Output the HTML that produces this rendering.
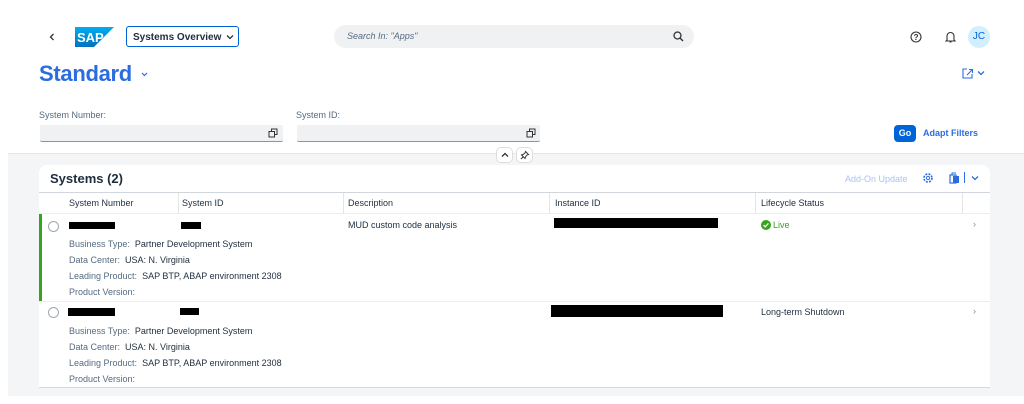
<!DOCTYPE html>
<html><head><meta charset="utf-8"><style>
*{box-sizing:border-box;margin:0;padding:0}
body{width:1024px;height:404px;background:#fff;font-family:"Liberation Sans",sans-serif;position:relative;overflow:hidden;color:#1d2d3e}
.a{position:absolute}
.lbl{font-size:9px;color:#556b82}
.inp{background:#eff1f2;border-bottom:1px solid #8396a8;height:17px;border-radius:2px}
.th{font-size:9px;color:#1d2d3e;top:198px}
.vl{position:absolute;top:193px;width:1px;height:20px;background:#e5e5e5}
.det{font-size:9px;color:#556b82;position:absolute;left:69px}
.det b{font-weight:normal;color:#1d2d3e}
.blk{position:absolute;background:#000}
.radio{position:absolute;width:11px;height:11px;border:1px solid #a0a8b0;border-radius:50%;left:48px}
</style></head><body>
<svg class="a" style="left:49px;top:33px" width="6" height="8" viewBox="0 0 6 8"><path d="M4.5 1L1.5 4l3 3" fill="none" stroke="#333" stroke-width="1.3"/></svg>
<svg class="a" style="left:75px;top:27px" width="39" height="20" viewBox="0 0 39 20"><defs><linearGradient id="g" x1="0" y1="0" x2="0" y2="1"><stop offset="0" stop-color="#00aeef"/><stop offset="1" stop-color="#0070c0"/></linearGradient></defs><polygon points="0,0 39,0 19,20 0,20" fill="url(#g)"/><text x="2" y="15" font-family="Liberation Sans" font-weight="bold" font-size="13" fill="#fff">SAP</text></svg>
<div class="a" style="left:126px;top:26px;width:113px;height:21px;border:1px solid #0064d9;border-radius:3px;font-size:10px;font-weight:bold;padding:5px 0 0 6px;color:#1d2d3e">Systems Overview</div>
<svg class="a" style="left:226px;top:34px" width="8" height="6" viewBox="0 0 8 6"><path d="M1 1.5l3 3 3-3" fill="none" stroke="#333" stroke-width="1.3"/></svg>
<div class="a" style="left:334px;top:25px;width:360px;height:23px;background:#eff1f2;border-radius:12px;font-size:9px;font-style:italic;color:#556b82;padding:6px 0 0 13px">Search In: "Apps"</div>
<svg class="a" style="left:673px;top:31px" width="11" height="11" viewBox="0 0 11 11"><circle cx="4.5" cy="4.5" r="3.5" fill="none" stroke="#333" stroke-width="1.3"/><line x1="7" y1="7" x2="10" y2="10" stroke="#333" stroke-width="1.4"/></svg>
<svg class="a" style="left:910px;top:31px" width="12" height="12" viewBox="0 0 12 12"><circle cx="6" cy="6" r="5" fill="none" stroke="#333" stroke-width="1.1"/><text x="3.6" y="9" font-size="8" font-family="Liberation Sans" font-weight="bold" fill="#333">?</text></svg>
<svg class="a" style="left:945px;top:31px" width="11" height="12" viewBox="0 0 11 12"><path d="M2 9V5a3.5 3.5 0 0 1 7 0v4l1 1H1z" fill="none" stroke="#333" stroke-width="1.1"/><path d="M4.5 11h2" stroke="#333"/></svg>
<div class="a" style="left:968px;top:26px;width:22px;height:22px;border-radius:50%;background:#d1efff;color:#0064d9;font-size:10px;text-align:center;line-height:22px">JC</div>
<div class="a" style="left:39px;top:61px;font-size:22px;font-weight:bold;color:#2b6de0;letter-spacing:-0.3px">Standard</div>
<svg class="a" style="left:141px;top:72px" width="7" height="5" viewBox="0 0 7 5"><path d="M1 1l2.5 2.5L6 1" fill="none" stroke="#2b6de0" stroke-width="1.2"/></svg>
<svg class="a" style="left:962px;top:68px" width="12" height="11" viewBox="0 0 12 11"><path d="M5 1H1v9h9V6" fill="none" stroke="#2b6de0" stroke-width="1.1"/><path d="M5 7L10 2M7 1.5h3.5V5" fill="none" stroke="#2b6de0" stroke-width="1.1"/></svg>
<svg class="a" style="left:977px;top:70px" width="8" height="6" viewBox="0 0 8 6"><path d="M1 1.5l3 3 3-3" fill="none" stroke="#2b6de0" stroke-width="1.3"/></svg>
<div class="a lbl" style="left:39px;top:110px">System Number:</div>
<div class="a lbl" style="left:296px;top:110px">System ID:</div>
<div class="a inp" style="left:40px;top:125px;width:243px"></div>
<div class="a inp" style="left:297px;top:125px;width:243px"></div>
<svg class="a" style="left:268px;top:128px" width="10" height="10" viewBox="0 0 10 10"><rect x="1" y="3.5" width="5.5" height="5.5" fill="none" stroke="#333"/><path d="M3.5 3.5V1h5.5v5.5H6.5" fill="none" stroke="#333"/></svg>
<svg class="a" style="left:526px;top:128px" width="10" height="10" viewBox="0 0 10 10"><rect x="1" y="3.5" width="5.5" height="5.5" fill="none" stroke="#333"/><path d="M3.5 3.5V1h5.5v5.5H6.5" fill="none" stroke="#333"/></svg>
<div class="a" style="left:894px;top:125px;width:22px;height:17px;background:#0064d9;border-radius:4px;color:#fff;font-size:9px;font-weight:bold;text-align:center;line-height:17px">Go</div>
<div class="a" style="left:923px;top:128px;font-size:9px;font-weight:bold;color:#2b6de0">Adapt Filters</div>
<div class="a" style="left:8px;top:153px;width:1016px;height:243px;background:#f4f5f6;border-top:1px solid #e5e5e5"></div>
<div class="a" style="left:496px;top:147px;width:17px;height:16px;background:#fff;border:1px solid #ddd;border-radius:5px"></div>
<svg class="a" style="left:501px;top:152px" width="8" height="6" viewBox="0 0 8 6"><path d="M1 4.5l3-3 3 3" fill="none" stroke="#333" stroke-width="1.3"/></svg>
<div class="a" style="left:516px;top:147px;width:17px;height:16px;background:#fff;border:1px solid #ddd;border-radius:5px"></div>
<svg class="a" style="left:520px;top:150px" width="10" height="10" viewBox="0 0 10 10"><path d="M5.5 1.5l3 3-1.5 0.5-1.5 2-0.5 1.5-3.5-3.5 1.5-0.5 2-1.5z M3 7l-2 2" fill="none" stroke="#333" stroke-width="1"/></svg>
<div class="a" style="left:39px;top:165px;width:951px;height:223px;background:#fff;border-radius:8px 8px 0 0;border-bottom:1px solid #d9d9d9"></div>
<div class="a" style="left:50px;top:171px;font-size:13px;font-weight:bold">Systems (2)</div>
<div class="a" style="left:845px;top:174px;font-size:9px;color:#a8c4ef">Add-On Update</div>
<svg class="a" style="left:922px;top:172px" width="12" height="12" viewBox="0 0 12 12"><circle cx="6" cy="6" r="4" fill="none" stroke="#2b6de0" stroke-width="1.6" stroke-dasharray="2 1.2"/><circle cx="6" cy="6" r="1.6" fill="none" stroke="#2b6de0"/></svg>
<svg class="a" style="left:949px;top:172px" width="13" height="12" viewBox="0 0 13 12"><rect x="1" y="3" width="6" height="8" fill="none" stroke="#2b6de0" stroke-width="1.2"/><rect x="4" y="4" width="6" height="7" fill="#2b6de0"/><path d="M3 3V1h4" stroke="#2b6de0" fill="none"/></svg>
<div class="a" style="left:964px;top:172px;width:1px;height:11px;background:#2b6de0"></div>
<svg class="a" style="left:971px;top:175px" width="8" height="6" viewBox="0 0 8 6"><path d="M1 1.5l3 3 3-3" fill="none" stroke="#2b6de0" stroke-width="1.3"/></svg>
<div class="a" style="left:39px;top:192px;width:951px;height:1px;background:#d0d6dc"></div>
<div class="a" style="left:39px;top:213px;width:951px;height:1px;background:#eee"></div>
<div class="vl" style="left:178px"></div><div class="vl" style="left:343px"></div><div class="vl" style="left:549px"></div><div class="vl" style="left:755px"></div><div class="vl" style="left:962px"></div>
<div class="a th" style="left:69px">System Number</div>
<div class="a th" style="left:182px">System ID</div>
<div class="a th" style="left:348px">Description</div>
<div class="a th" style="left:555px">Instance ID</div>
<div class="a th" style="left:761px">Lifecycle Status</div>
<div class="a" style="left:39px;top:214px;width:3px;height:87px;background:#36a41d"></div>
<div class="radio" style="top:221px"></div>
<div class="blk" style="left:69px;top:222px;width:46px;height:7px"></div>
<div class="blk" style="left:181px;top:222px;width:20px;height:7px"></div>
<div class="a" style="left:348px;top:220px;font-size:9px">MUD custom code analysis</div>
<div class="blk" style="left:554px;top:218px;width:164px;height:10px"></div>
<svg class="a" style="left:761px;top:220px" width="10" height="10" viewBox="0 0 10 10"><circle cx="5" cy="5" r="5" fill="#36a41d"/><path d="M2.6 5.2l1.6 1.6 3.2-3.4" stroke="#fff" stroke-width="1.3" fill="none"/></svg>
<div class="a" style="left:773px;top:220px;font-size:9px;color:#36a41d">Live</div>
<div class="a" style="left:973px;top:219px;font-size:9px;color:#889">&#8250;</div>
<div class="det" style="top:239px">Business Type:&nbsp; <b>Partner Development System</b></div>
<div class="det" style="top:255px">Data Center:&nbsp; <b>USA: N. Virginia</b></div>
<div class="det" style="top:271px">Leading Product:&nbsp; <b>SAP BTP, ABAP environment 2308</b></div>
<div class="det" style="top:287px">Product Version:</div>
<div class="a" style="left:39px;top:301px;width:951px;height:1px;background:#eee"></div>
<div class="radio" style="top:307px"></div>
<div class="blk" style="left:68px;top:308px;width:47px;height:8px"></div>
<div class="blk" style="left:180px;top:308px;width:19px;height:7px"></div>
<div class="blk" style="left:551px;top:305px;width:172px;height:12px"></div>
<div class="a" style="left:761px;top:307px;font-size:9px">Long-term Shutdown</div>
<div class="a" style="left:973px;top:306px;font-size:9px;color:#889">&#8250;</div>
<div class="det" style="top:326px">Business Type:&nbsp; <b>Partner Development System</b></div>
<div class="det" style="top:342px">Data Center:&nbsp; <b>USA: N. Virginia</b></div>
<div class="det" style="top:358px">Leading Product:&nbsp; <b>SAP BTP, ABAP environment 2308</b></div>
<div class="det" style="top:374px">Product Version:</div>
</body></html>
